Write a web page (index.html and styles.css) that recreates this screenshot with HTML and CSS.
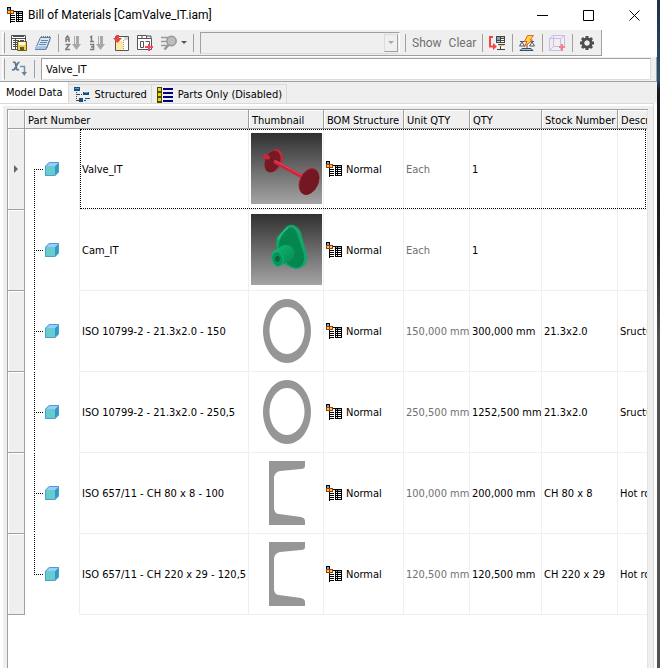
FILE: index.html
```html
<!DOCTYPE html>
<html lang="en">
<head>
<meta charset="utf-8">
<title>Bill of Materials</title>
<link rel="stylesheet" href="styles.css">
</head>
<body>
<svg class="defs" aria-hidden="true">
  <defs>
    <linearGradient id="shade" x1="0" y1="0" x2="0" y2="1">
      <stop offset="0" stop-color="#303030"/><stop offset="1" stop-color="#a4a4a4"/>
    </linearGradient>
    <linearGradient id="green" x1="0" y1="0" x2="1" y2="1">
      <stop offset="0" stop-color="#0fbd78"/><stop offset="1" stop-color="#05854e"/>
    </linearGradient>
    <symbol id="bom" viewBox="0 0 16 16">
      <g shape-rendering="crispEdges">
        <path fill="#000" d="M0 0h4v4H0zM3 7h1v9H3zM4 8h4v1H4zM4 10h4v1H4zM4 12h4v1H4zM4 14h4v1H4zM6 4h4v1H6zM9 4h7v11H9z"/>
        <path fill="#6fa8dc" d="M1 1h2v2H1z"/>
        <path fill="#a03c00" d="M0 3h7v4H0z"/>
        <path fill="#ffc85a" d="M1 4h2v2H1zM4 4h2v2H4z"/>
        <path fill="#7db4dc" d="M10 5h1v1h-1zM12 5h3v1h-3z"/>
        <path fill="#fff" d="M10 7h1v1h-1zM12 7h3v1h-3zM10 9h1v1h-1zM12 9h3v1h-3zM10 11h1v1h-1zM12 11h3v1h-3zM10 13h1v1h-1zM12 13h3v1h-3z"/>
      </g>
    </symbol>
    <symbol id="cube" viewBox="0 0 14 14">
      <path fill="#66cccc" d="M0 4h10v10H0z"/><path fill="#99ccff" d="M0 4l4-4h10l-4 4z"/>
      <path fill="#3399cc" d="M10 4l4-4v10l-4 4z"/>
      <path fill="none" stroke="#4c9fc9" d="M.5 4.300v9.200h9.300l3.700-3.700V.5H4.200L.5 4.300"/>
    </symbol>
    <symbol id="ring" viewBox="0 0 71 71">
      <path fill="#969696" fill-rule="evenodd" d="M36 4a24 32 0 1 1-.01 0zM36 12a17.500 23.500 0 1 0 .01 0z"/>
    </symbol>
    <symbol id="channel" viewBox="0 0 71 71">
      <path fill="#969696" d="M18 4h36v5q0 3-4 3l-21 2q-5 1-6 6v32q1 5 5 5l22 3q4 1 4 4v4H18z"/>
    </symbol>
  </defs>
</svg>
<div class="desktop">
<main class="window">
  <header class="titlebar">
    <svg class="icon" aria-hidden="true"><use href="#bom"/></svg>
    <h1>Bill of Materials [CamValve_IT.iam]</h1>
    <button class="caption" aria-label="Minimize"><svg viewBox="0 0 11 11"><path d="M0 5.500h11"/></svg></button>
    <button class="caption" aria-label="Maximize"><svg viewBox="0 0 11 11"><path d="M.5.5h10v10H.5z"/></svg></button>
    <button class="caption" aria-label="Close"><svg viewBox="0 0 11 11"><path d="M.5.5l10 10M10.500.5l-10 10"/></svg></button>
  </header>

  <div class="bar tools" role="toolbar" aria-label="Bill of materials">
    <button aria-label="Export"><svg class="icon" viewBox="0 0 16 16">
      <path fill="#fff" stroke="#505050" d="M.5.500h14v14H.5z"/><path stroke="#505050" d="M1 3.500h13M2 5.500h2M5 5.500h3M9 5.500h4M2 7.500h2M5 7.500h3M2 9.500h2M5 9.500h2M2 11.500h2M5 11.500h2"/><path stroke="#505050" d="M4.500 3v11M2 1.500h11"/>
      <path fill="#f2cf4a" stroke="#6b5a20" d="M6.500 6.500h9v9h-9z"/><path fill="#fff" d="M8 7h6v3H8z"/><path fill="#6b5a20" d="M9 12h4v3H9z"/></svg></button>
    <button aria-label="Engineer's notebook"><svg class="icon" viewBox="0 0 16 16">
      <path fill="#dce8f6" stroke="#5b7896" d="M5.500 2.500h10l-4 11H.5z"/><path fill="#a9c5e4" d="M1 11h11l-1 3H0z"/><path stroke="#6484a6" d="M6 5.500h7M5 7.500h7M4 9.500h7M0 14.500h11l4-10"/><path stroke="#5b7896" stroke-dasharray="1 1" d="M6 1.500h10"/></svg></button>
    <span class="sep"></span>
    <button aria-label="Sort"><svg class="icon" viewBox="0 0 16 16">
      <path fill="#a8a8a8" d="M9 1h1v9H9zM11 1h3v9h-3zM7 9h9l-4.500 6z"/><path fill="none" stroke="#7c7c7c" stroke-width="1.500" d="M1 7V3l1.500-2L4 3v4M1 4.500h3M.5 9.500h4l-4 5H5"/></svg></button>
    <button aria-label="Renumber items"><svg class="icon" viewBox="0 0 16 16">
      <path fill="#a8a8a8" d="M9 1h1v9H9zM11 1h3v9h-3zM7 9h9l-4.500 6z"/><path fill="none" stroke="#7c7c7c" stroke-width="1.500" d="M1 2.500l1.500-1V7M1 6.500h4M1 9.500h3.500v5H1M2 12h2.500"/></svg></button>
    <button aria-label="Choose columns"><svg class="icon" viewBox="0 0 16 16">
      <path fill="#fff" stroke="#555" d="M2.500 1.500h13v14h-13z"/><path fill="#ffe8a0" d="M3 6h7v9H3z"/><path fill="#d5d5d5" d="M11 2h4v3h-4z"/><path stroke="#999" stroke-dasharray="1 1" d="M10.500 5v10"/><path fill="#f04040" d="M3 0h3v3h3L4.500 8 0 3h3z"/></svg></button>
    <button aria-label="Add custom columns"><svg class="icon" viewBox="0 0 16 16">
      <path fill="#fff" stroke="#555" d="M.5.500h9v3h5v11H.5z"/><path fill="none" stroke="#555" d="M1 3.500h9M3.500 6.500h3v6h-3zM8.500 6.500h4v4M5 1v2M10 1h4v2"/><path fill="#ee4c5c" d="M11 9h2v2h3v2h-3v3h-2v-3H8v-2h3z"/></svg></button>
    <button class="wide" aria-label="View options"><svg class="icon" viewBox="0 0 16 16">
      <path stroke="#999" stroke-width="1.500" d="M0 2.500h8M0 6.500h5M0 10.500h6"/><circle cx="10.500" cy="6" r="4.700" fill="#bcbcbc" stroke="#969696" stroke-width="1.500"/><path stroke="#969696" stroke-width="2.500" d="M7.500 10l-4 4.500"/></svg><svg class="chev" viewBox="0 0 6 3"><path fill="#555" d="M0 0h6L3 3z"/></svg></button>
    <span class="sep"></span>
    <span class="combo"><select disabled aria-label="Filter"><option></option></select><span class="drop"><svg class="chev" viewBox="0 0 6 3"><path fill="#a8a8a8" d="M0 0h6L3 3z"/></svg></span></span>
    <span class="sep"></span>
    <button class="text">Show</button>
    <button class="text">Clear</button>
    <span class="sep"></span>
    <button aria-label="Row merge settings"><svg class="icon" viewBox="0 0 16 16">
      <path fill="none" stroke="#f04848" stroke-width="2" d="M4 2H1v9.500h4"/><path fill="#f04848" d="M4 8l4 3.500L4 15z"/><g shape-rendering="crispEdges"><path fill="#444" d="M7 1h9v7H7zM9 9h7v1H9zM11 11h1v3h-1zM8 14h8v1H8z"/><path fill="#6aa5df" d="M8 2h3v3H8z"/><path fill="#e8cc64" d="M12 2h3v1h-3zM8 6h3v1H8zM10 10h5v1h-5z"/><path fill="#fff" d="M12 4h3v1h-3zM12 6h3v1h-3zM12 12h3v1h-3z"/></g></svg></button>
    <span class="sep"></span>
    <button aria-label="Update mass properties"><svg class="icon" viewBox="0 0 16 16">
      <path fill="none" stroke="#4d5964" d="M1 6.500h14M3 7l-2.500 4h5zM13 7l-2.500 4h5zM8 6v7"/><path fill="#aac4dd" stroke="#3a4a58" d="M3 13.500h9l2 2H1z"/><path fill="#ffd93b" stroke="#ef5a38" d="M8.500.500h6L11 5h2.500L5 12l3-5.500H5.500z"/></svg></button>
    <span class="sep"></span>
    <button aria-label="Add virtual component"><svg class="icon" viewBox="0 0 16 16">
      <path fill="none" stroke="#cdb9f2" d="M.5 3.500h11v12H.5zM.5 3.500l3-3h12v11l-4 4M11.500 3.500l4-3M4.500 1v10.500H15M.5 15.500l4-4"/><path fill="#f5828e" d="M12 9h2v2h2v2h-2v3h-2v-3h-2v-2h2z"/></svg></button>
    <span class="sep"></span>
    <button aria-label="Settings"><svg class="icon" viewBox="0 0 16 16">
      <circle cx="8" cy="8" r="4" fill="none" stroke="#4d4d4d" stroke-width="3"/><path stroke="#4d4d4d" stroke-width="3" d="M8 1v3M8 12v3M1 8h3M12 8h3M3 3l2 2M11 11l2 2M13 3l-2 2M5 11l-2 2"/><circle cx="8" cy="8" r="2.500" fill="#efefef"/></svg></button>
  </div>

  <div class="bar formula">
    <button aria-label="Expression builder"><svg class="icon" viewBox="0 0 16 16">
      <path fill="none" stroke="#5f7690" stroke-width="1.800" d="M2 1.500q2-1 2.500 1l1 5q.5 2 2.500 1M8.500 1.500q-1-.5-2.500 2l-2 4q-1 2-3 1"/><path fill="none" stroke="#7890aa" stroke-width="1.500" d="M9 5.500h4.500V12"/><path fill="#6b849f" d="M10.500 11h5.500l-2.700 4z"/></svg></button>
    <span class="sep"></span>
    <input type="text" value="Valve_IT" aria-label="Cell value">
  </div>

  <div class="tabs" role="tablist">
    <button class="tab active" role="tab" aria-selected="true">Model Data</button>
    <button class="tab" role="tab" aria-selected="false"><svg class="icon" viewBox="0 0 16 16"><g shape-rendering="crispEdges">
      <path fill="#17507c" d="M0 0h6v4H0zM9 5h6v3H9zM5 11h4v4H5zM11 11h5v1h-5z"/><path fill="#5ba0d8" d="M1 1h4v1H1zM10 5h4v1h-4z"/><path fill="#444" d="M2 5h1v1H2zM2 7h4v1H2zM2 9h1v1H2zM2 11h1v1H2zM2 13h3v1H2zM7 7h1v1H7zM10 13h2v1h-2z"/></g></svg>Structured</button>
    <button class="tab" role="tab" aria-selected="false"><svg class="icon" viewBox="0 0 16 16"><g shape-rendering="crispEdges">
      <path fill="#504800" d="M0 0h5v16H0z"/><path fill="#e8d800" d="M1 1h3v3H1zM1 6h3v3H1zM1 11h3v3H1z"/><path fill="#000080" d="M6 1h10v2H6zM6 5h10v2H6zM6 9h10v2H6zM6 13h10v2H6z"/></g></svg>Parts Only (Disabled)</button>
  </div>

  <section class="page" role="tabpanel">
    <div class="grid">
      <table>
        <colgroup><col class="c-head"><col class="c-tree"><col class="c-name"><col class="c-thumb"><col class="c-bom"><col class="c-unit"><col class="c-qty"><col class="c-stock"><col></colgroup>
        <thead>
          <tr><th></th><th colspan="2">Part Number</th><th>Thumbnail</th><th>BOM Structure</th><th>Unit QTY</th><th>QTY</th><th>Stock Number</th><th>Description</th></tr>
        </thead>
        <tbody>
          <tr>
            <td class="rowhead"><svg class="marker" viewBox="0 0 4 8"><path fill="#666" d="M0 0l4 4-4 4z"/></svg></td>
            <td class="tree first"><svg class="cube"><use href="#cube"/></svg></td><td>Valve_IT</td>
            <td class="thumb"><svg viewBox="0 0 71 71"><path fill="url(#shade)" d="M0 0h71v71H0z"/>
              <path stroke="#c7283d" stroke-width="5" stroke-linecap="round" d="M14 23.500l6 3"/>
              <ellipse cx="23.300" cy="27.500" rx="8" ry="11.500" fill="#c7283d" transform="rotate(20 23.300 27.500)"/>
              <ellipse cx="21.500" cy="28.500" rx="7.500" ry="11.300" fill="#771923" transform="rotate(20 21.500 28.500)"/>
              <path stroke="#c7283d" stroke-width="4" stroke-linecap="round" d="M14 23.500l3 1M24.500 29L52 44"/>
              <path stroke="#e04a5c" stroke-width="1" d="M24 27.500L52 43"/>
              <ellipse cx="58" cy="48.500" rx="9.500" ry="14" fill="#b02437" transform="rotate(24 58 48.500)"/>
              <ellipse cx="58.300" cy="48.800" rx="9" ry="13.500" fill="#731822" transform="rotate(24 58.300 48.800)"/></svg></td>
            <td class="bom"><svg class="icon"><use href="#bom"/></svg>Normal</td><td class="muted">Each</td><td>1</td><td></td><td></td>
          </tr>
          <tr>
            <td class="rowhead"></td><td class="tree"><svg class="cube"><use href="#cube"/></svg></td><td>Cam_IT</td>
            <td class="thumb"><svg viewBox="0 0 71 71"><path fill="url(#shade)" d="M0 0h71v71H0z"/>
              <path fill="#13a66b" d="M34 14q5-6 12-1 4 3 5 10l5 18q1 6-2 10-4 4-10 4-12-3-17-14l-2-11 1-7q3-3 8-9z"/>
              <path fill="#04874f" d="M37 15q4-4 8 2l8 23q1 9-4 13-6 2-11-2L27 39l1-9q1-8 9-15z"/>
              <path fill="none" stroke="#2cc88d" d="M27 26q5-10 10-12"/>
              <path fill="url(#green)" d="M22 37l11-6q8-1 10 6 1 7-3 9l-11 6q-8 1-8-8z"/>
              <ellipse cx="26.500" cy="45" rx="5.500" ry="7.500" fill="#089459" stroke="#13b678" transform="rotate(-15 26.500 45)"/>
              <ellipse cx="26.500" cy="45" rx="2.200" ry="3" fill="#05653e"/></svg></td>
            <td class="bom"><svg class="icon"><use href="#bom"/></svg>Normal</td><td class="muted">Each</td><td>1</td><td></td><td></td>
          </tr>
          <tr>
            <td class="rowhead"></td><td class="tree"><svg class="cube"><use href="#cube"/></svg></td><td>ISO 10799-2 - 21.3x2.0 - 150</td>
            <td class="thumb"><svg><use href="#ring"/></svg></td>
            <td class="bom"><svg class="icon"><use href="#bom"/></svg>Normal</td><td class="muted">150,000 mm</td><td>300,000 mm</td><td>21.3x2.0</td><td>Sructural</td>
          </tr>
          <tr>
            <td class="rowhead"></td><td class="tree"><svg class="cube"><use href="#cube"/></svg></td><td>ISO 10799-2 - 21.3x2.0 - 250,5</td>
            <td class="thumb"><svg><use href="#ring"/></svg></td>
            <td class="bom"><svg class="icon"><use href="#bom"/></svg>Normal</td><td class="muted">250,500 mm</td><td>1252,500 mm</td><td>21.3x2.0</td><td>Sructural</td>
          </tr>
          <tr>
            <td class="rowhead"></td><td class="tree"><svg class="cube"><use href="#cube"/></svg></td><td>ISO 657/11 - CH 80 x 8 - 100</td>
            <td class="thumb"><svg><use href="#channel"/></svg></td>
            <td class="bom"><svg class="icon"><use href="#bom"/></svg>Normal</td><td class="muted">100,000 mm</td><td>200,000 mm</td><td>CH 80 x 8</td><td>Hot rolled</td>
          </tr>
          <tr>
            <td class="rowhead"></td><td class="tree last"><svg class="cube"><use href="#cube"/></svg></td><td>ISO 657/11 - CH 220 x 29 - 120,5</td>
            <td class="thumb"><svg><use href="#channel"/></svg></td>
            <td class="bom"><svg class="icon"><use href="#bom"/></svg>Normal</td><td class="muted">120,500 mm</td><td>120,500 mm</td><td>CH 220 x 29</td><td>Hot rolled</td>
          </tr>
        </tbody>
      </table>
      <div class="focus"></div>
    </div>
  </section>
</main>
</div>
</body>
</html>
```
FILE: styles.css
```css
*, *::before { box-sizing: border-box; }
body {
  margin: 0;
  font: 11px/14px "DejaVu Sans Condensed", "Noto Sans", sans-serif;
  color: #000;
}
button, input, select { font: inherit; color: inherit; margin: 0; border: 0; border-radius: 0; background: none; padding: 0; }
svg { display: block; flex: none; }
.defs { position: absolute; width: 0; height: 0; }
.icon { width: 16px; height: 16px; fill: none; }
.chev { width: 6px; height: 3px; }

.desktop {
  display: flex;
  min-height: 100vh;
  padding-right: 3px;
  background: linear-gradient(#1d3147 0, #2b4d70 80px, #15181c 90px, #1c1e20 240px, #505356 340px, #505356 100%);
}
.window { flex: 1; min-width: 0; display: flex; flex-direction: column; background: #fff; }

.titlebar { display: flex; align-items: center; height: 30px; padding-left: 7px; }
.titlebar h1 { flex: 1; margin: 0 0 0 5px; font: 12px/16px Roboto, "Noto Sans", sans-serif; white-space: nowrap; }
.caption { display: flex; align-items: center; justify-content: center; width: 46px; height: 30px; }
.caption svg { width: 11px; height: 11px; fill: none; stroke: #000; }

.bar { display: flex; align-items: center; background: #efefef; border-bottom: 1px solid #a0a0a0; }
.bar::before { content: ""; width: 3px; height: 22px; margin: 0 2px; border: 1px solid #fff; border-right-color: #a0a0a0; }
.bar button { display: flex; align-items: center; justify-content: center; gap: 4px; width: 24px; height: 24px; }
.bar .wide { width: 33px; }
.bar .text { width: auto; padding: 0 3px 0 4px; font: 12px/16px Roboto, "Noto Sans", sans-serif; color: #707070; }
.sep { width: 6px; height: 18px; flex: none; display: flex; justify-content: center; }
.sep::before { content: ""; width: 1px; background: #a0a0a0; }
.tools { align-self: flex-start; height: 26px; padding-right: 2px; border-right: 1px solid #a0a0a0; box-shadow: 0 1px #fff; }
.combo { display: flex; align-items: center; width: 200px; height: 22px; margin: 0 2px 0 4px; padding-right: 1px; background: #efefef; border: 1px solid #a0a0a0; border-right-color: #fff; border-bottom-color: #dcdcdc; }
.combo select { flex: 1; min-width: 0; height: 18px; appearance: none; opacity: 1; }
.drop { display: flex; align-items: center; justify-content: center; width: 14px; height: 18px; border: 1px solid #dcdcdc; border-right-color: #a0a0a0; border-bottom-color: #a0a0a0; }
.formula { height: 25px; margin-top: 1px; padding-right: 5px; border-right: 1px solid #a0a0a0; }
.formula input { flex: 1; min-width: 0; height: 22px; margin-left: 4px; padding: 0 4px; background: #fff; border: 1px solid #a0a0a0; border-right-color: #dcdcdc; border-bottom-color: #dcdcdc; }

.tabs { display: flex; align-items: flex-end; height: 21px; background: #efefef; }
.tab { display: flex; align-items: center; gap: 5px; height: 19px; padding: 1px 4px 0 5px; border: 1px solid #d9d9d9; border-width: 1px 1px 0 0; white-space: nowrap; }
.tab.active { height: 21px; padding: 0 5px 0 6px; background: #fff; border-top: 0; }

.page { flex: 1; display: flex; margin: 0 3px 0 0; padding: 2px 0 0 3px; border: 1px solid #d9d9d9; border-width: 1px 1px 0 0; }
.grid { position: relative; flex: 1; min-width: 0; padding: 0 1px; border: solid #efefef; border-width: 3px 5px 0 4px; overflow: hidden; box-shadow: inset 1px 0 #a0a0a0, inset -1px 0 #e3e3e3; }
.grid::before { content: ""; display: block; height: 1px; margin: 0 -1px; background: #a0a0a0; }
table { width: 100%; table-layout: fixed; border-collapse: separate; border-spacing: 0; }
.c-head { width: 17px; }
.c-tree { width: 55px; }
.c-name { width: 169px; }
.c-thumb { width: 75px; }
.c-bom { width: 80px; }
.c-unit { width: 66px; }
.c-qty { width: 72px; }
.c-stock { width: 76px; }
th { height: 19px; padding: 3px 0 0 3px; font-weight: 400; text-align: left; white-space: nowrap; overflow: hidden; background: #efefef; border: 1px solid #a0a0a0; border-width: 0 1px 1px 0; box-shadow: inset 1px 1px #fff; }
td { height: 81px; padding: 2px 0 0 2px; white-space: nowrap; overflow: hidden; border: 1px solid #efefef; border-width: 0 1px 1px 0; vertical-align: middle; }
th:last-child, td:last-child { border-right: 0; }
.bom { padding-top: 0; }
td .icon { display: inline-block; vertical-align: -4px; margin-right: 4px; }
.muted { color: #707070; }
.rowhead { padding: 0 0 0 6px; background: #efefef; border-color: #a0a0a0; box-shadow: inset 1px 1px #fff; }
.marker { width: 4px; height: 8px; }
.tree {
  padding: 0 0 0 20px;
  border-bottom-color: #fff;
  background: repeating-linear-gradient(90deg, #000 0 1px, transparent 1px 2px) 9px 40px / 9px 1px no-repeat,
    repeating-linear-gradient(#000 0 1px, transparent 1px 2px) 9px 0 / 1px 100% no-repeat;
}
.tree.first { background-position: 9px 40px, 9px 40px; }
.tree.last { background-size: 9px 1px, 1px 40px; }
.cube { width: 14px; height: 14px; }
.thumb { padding: 0 0 1px 2px; }
.thumb svg { width: 71px; height: 71px; }
.focus { position: absolute; top: 20px; left: 73px; right: 2px; height: 80px; border: 1px dotted #000; pointer-events: none; }
```
